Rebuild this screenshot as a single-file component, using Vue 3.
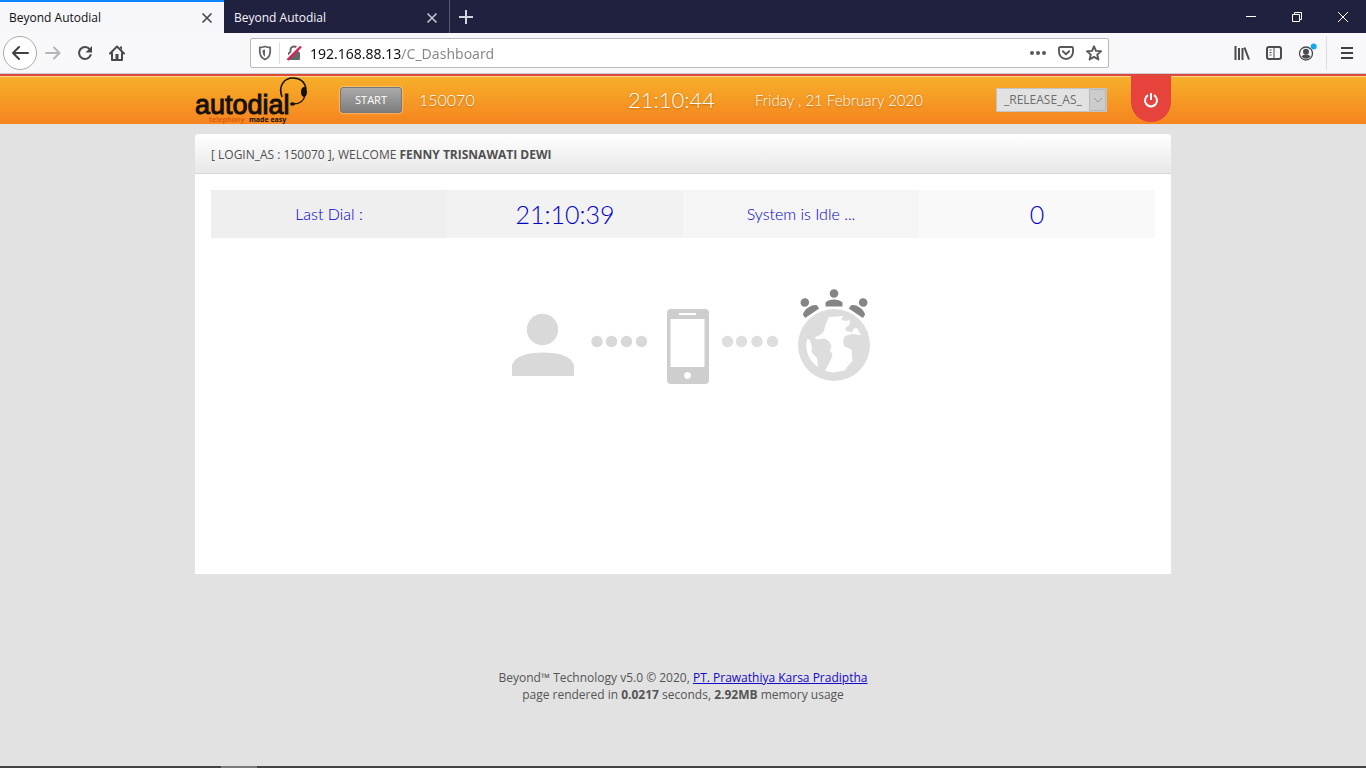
<script setup>
import { ref } from 'vue'

const url = ref('192.168.88.13/C_Dashboard')
const release = ref('_RELEASE_AS_')
const stats = [
  { text: 'Last Dial :', big: false },
  { text: '21:10:39', big: true },
  { text: 'System is Idle ...', big: false },
  { text: '0', big: true },
]
</script>

<template>
  <div class="window">
    <header class="browser">
      <div class="tabs">
        <div class="tab active">
          <span>Beyond Autodial</span>
          <button class="plain" aria-label="Close tab"><svg width="12" height="12" viewBox="0 0 12 12"><path d="M1.5 1.5l9 9m0-9l-9 9" stroke="#45454a" stroke-width="1.6" /></svg></button>
        </div>
        <div class="tab">
          <span>Beyond Autodial</span>
          <button class="plain" aria-label="Close tab"><svg width="12" height="12" viewBox="0 0 12 12"><path d="M1.5 1.5l9 9m0-9l-9 9" stroke="#c4c4d2" stroke-width="1.6" /></svg></button>
        </div>
        <button class="plain new" aria-label="New tab"><svg width="16" height="16" viewBox="0 0 16 16"><path d="M8 1v14M1 8h14" stroke="#d4d4de" stroke-width="2" /></svg></button>
        <div class="controls">
          <button class="plain" aria-label="Minimize"><svg width="12" height="12" viewBox="0 0 12 12"><path d="M1 5.5h10" stroke="#fff" /></svg></button>
          <button class="plain" aria-label="Restore"><svg width="12" height="12" viewBox="0 0 12 12"><path d="M1.5 3.5h7v7h-7zM3.5 3V1.500h7v7H9" fill="none" stroke="#fff" /></svg></button>
          <button class="plain" aria-label="Close window"><svg width="12" height="12" viewBox="0 0 12 12"><path d="M1 1l10 10M11 1L1 11" stroke="#fff" /></svg></button>
        </div>
      </div>

      <div class="toolbar">
        <div class="nav">
          <button class="plain back" aria-label="Back"><svg width="18" height="16" viewBox="0 0 18 16"><path d="M17 8H2m6-6L2 8l6 6" fill="none" stroke="#3f3f44" stroke-width="2" stroke-linecap="round" stroke-linejoin="round" /></svg></button>
          <button class="plain" aria-label="Forward"><svg width="16" height="14" viewBox="0 0 16 14"><path d="M1 7h13M9 1.500L14.500 7 9 12.500" fill="none" stroke="#b6b6b9" stroke-width="2" stroke-linecap="round" stroke-linejoin="round" /></svg></button>
          <button class="plain" aria-label="Reload"><svg width="16" height="16" viewBox="0 0 16 16"><path d="M12.800 4.300A6 6 0 1 0 13.700 10" fill="none" stroke="#49494e" stroke-width="2" stroke-linecap="round" /><path d="M15 1v6.500H8.500z" fill="#49494e" /></svg></button>
          <button class="plain" aria-label="Home"><svg width="16" height="16" viewBox="0 0 16 16"><path d="M1 8.500L8 1.500l7 7M3 7.500V15h10V7.500" fill="none" stroke="#49494e" stroke-width="2" stroke-linecap="round" stroke-linejoin="round" /><path d="M6.500 9h3v6h-3zM11 1.500h2V5l-2-2z" fill="#49494e" /></svg></button>
        </div>
        <div class="address">
          <svg width="14" height="16" viewBox="0 0 14 16"><path d="M7 1.500c2 .8 4 1 5.200 1v4.300c0 3.800-2 6.200-5.200 7.700-3.200-1.500-5.200-3.900-5.200-7.700V2.500c1.200 0 3.200-.2 5.200-1z" fill="none" stroke="#646468" stroke-width="1.800" stroke-linejoin="round" /><path d="M7 4.500v7.200C5.300 10.400 4.600 9 4.600 6.500V5.100z" fill="#646468" /></svg>
          <i class="split"></i>
          <svg width="16" height="16" viewBox="0 0 16 16"><path d="M4.500 8V5a3.500 3.500 0 0 1 7 0v3" fill="none" stroke="#666" stroke-width="2" /><rect x="2" y="7" width="12" height="8" rx="1" fill="#666" /><path d="M.5 13.500L13.500 .5" stroke="#fff" stroke-width="2" /><path d="M1.500 15L15 1.500" stroke="#df2056" stroke-width="2.400" /></svg>
          <input v-model="url" type="text" aria-label="Address" />
          <button class="plain" aria-label="Page actions"><svg width="16" height="4" viewBox="0 0 16 4"><g fill="#58585c"><circle cx="2" cy="2" r="2" /><circle cx="8" cy="2" r="2" /><circle cx="14" cy="2" r="2" /></g></svg></button>
          <button class="plain" aria-label="Save to Pocket"><svg width="16" height="14" viewBox="0 0 16 14"><path d="M2.200 1h11.600q1.200 0 1.200 1.200V6A7 7 0 0 1 1 6V2.200Q1 1 2.200 1zM4.800 5.200L8 8.200l3.200-3" fill="none" stroke="#58585c" stroke-width="1.900" stroke-linecap="round" stroke-linejoin="round" /></svg></button>
          <button class="plain" aria-label="Bookmark"><svg width="16" height="16" viewBox="0 0 16 16"><path d="M8 1.300l2 4.600 5 .4-3.800 3.300 1.200 4.900L8 11.900l-4.400 2.600 1.200-4.900L1 6.300l5-.4z" fill="none" stroke="#58585c" stroke-width="1.900" stroke-linejoin="round" /></svg></button>
        </div>
        <div class="extras">
          <button class="plain" aria-label="Library"><svg width="16" height="14" viewBox="0 0 16 14"><path d="M1.500 0v14M5 2v12M8.500 2v12M10.500 1.500l4.500 12" fill="none" stroke="#4a4a4f" stroke-width="2" /></svg></button>
          <button class="plain" aria-label="Sidebar"><svg width="16" height="14" viewBox="0 0 16 14"><path d="M8 1v12M3.500 4h2M3.500 6.500h2M3.500 9h2" stroke="#4a4a4f" /><rect x="1" y="1" width="14" height="12" rx="2" fill="none" stroke="#4a4a4f" stroke-width="2" /></svg></button>
          <button class="plain" aria-label="Account"><svg width="20" height="20" viewBox="0 0 20 20"><circle cx="8" cy="10.500" r="6.500" fill="none" stroke="#4a4a4f" stroke-width="1.300" /><circle cx="8" cy="8.800" r="3" fill="#4a4a4f" /><path d="M3.500 13.500q1.200-2 4.500-2t4.500 2Q10.800 15.700 8 15.700t-4.500-2.200z" fill="#4a4a4f" /><circle cx="15.700" cy="3.500" r="3" fill="#12a8ec" /></svg></button>
          <button class="plain menu" aria-label="Menu"><svg width="12" height="12" viewBox="0 0 12 12"><path d="M0 1h12M0 6h12M0 11h12" stroke="#3f3f44" stroke-width="2" /></svg></button>
        </div>
      </div>
    </header>

    <div class="banner">
      <div class="banner-inner">
        <svg class="logo" width="114" height="48" viewBox="0 0 114 48" role="img" aria-label="autodial telephony made easy">
          <text class="word" x="0" y="38">autodial</text>
          <g class="tag"><text class="dim" x="14" y="46">telephony</text><text x="54" y="46">made easy</text></g>
          <path d="M87 21C83 10 89 2 98 2c8 0 12 5 13 11" fill="none" stroke="#15100a" stroke-width="1.600" />
          <path d="M110 19c-1 6-5 9-12 9" fill="none" stroke="#15100a" stroke-width="1.400" />
          <ellipse cx="109" cy="16" rx="3" ry="5" fill="#15100a" /><ellipse cx="97.500" cy="28" rx="2.500" ry="1.700" fill="#15100a" />
        </svg>
        <div><button class="start">START</button></div>
        <span class="agent">150070</span>
        <span class="clock">21:10:44</span>
        <span class="date">Friday , 21 February 2020</span>
        <div class="picker">
          <select v-model="release" aria-label="Release as"><option>_RELEASE_AS_</option></select>
          <span class="arrow"><svg width="10" height="6" viewBox="0 0 10 6"><path d="M1 1l4 4 4-4" fill="none" stroke="#999" /></svg></span>
        </div>
        <button class="power" aria-label="Log out"><svg width="16" height="16" viewBox="0 0 16 16"><path d="M5 3.200a6 6 0 1 0 6 0M8 1v7" fill="none" stroke="#fff" stroke-width="2" /></svg></button>
      </div>
    </div>

    <main class="panel">
      <h1>[ LOGIN_AS : 150070 ], WELCOME <b>FENNY TRISNAWATI DEWI</b></h1>
      <div class="stats">
        <div v-for="s in stats" :key="s.text" :class="{ big: s.big }">{{ s.text }}</div>
      </div>
      <svg class="flow" width="374" height="96" viewBox="-14 0 374 96" role="img" aria-label="Agent, phone and customers">
        <g fill="#d9d9d9"><circle cx="32.500" cy="40.500" r="15.700" /><path d="M2 87V76C5 67 17 63.500 33 63.500S61 67 64 76v11z" /></g>
        <g fill="#d8d8d8"><circle cx="87" cy="52.500" r="5.700" /><circle cx="101.500" cy="52.500" r="5.700" /><circle cx="116.500" cy="52.500" r="5.700" /><circle cx="131.500" cy="52.500" r="5.700" /></g>
        <path d="M161 20h34q4 0 4 4v67q0 4-4 4h-34q-4 0-4-4V24q0-4 4-4zm-.5 10v48h34V30zM169 24v2h17v-2zM177.500 83a3.500 3.500 0 1 0 .1 0z" fill="#cecece" fill-rule="evenodd" />
        <g fill="#dedede"><circle cx="217.500" cy="52.500" r="5.700" /><circle cx="231.500" cy="52.500" r="5.700" /><circle cx="247" cy="52.500" r="5.700" /><circle cx="262.500" cy="52.500" r="5.700" /></g>
        <circle cx="324" cy="56" r="36" fill="#ddd" />
        <g fill="#fff">
          <path d="M319 28L327 27.500 333 27 331.500 31 336.500 32 339.500 30.500 340 35 335 39.500 336.500 42 342 43.500 344 39.500 347 39 351 46 342 45 335 47 333 52 334 57 341.500 60.500 342.500 72 337 78 335 81.500 323 83.500 315 82 317.500 77 321 70.500 322.500 65 320 62 321.500 57 319.500 53 315 49.500 310.500 50 307 50.500 304.500 48.500 311 45.500 314 42 315 37z" />
          <path d="M297 50L300 51 302 58.500 301.500 63 307 69 308 78C300 73 294 62 297 50z" />
        </g>
        <g fill="#858585">
          <g><circle cx="324" cy="4.500" r="4.300" /><path d="M315.500 17.500v-4q3-3 8.500-3t8.500 3v4z" /></g>
          <g transform="rotate(-34.500 324 56)"><circle cx="324" cy="4.500" r="4.300" /><path d="M315.500 17.500v-4q3-3 8.500-3t8.500 3v4z" /></g>
          <g transform="rotate(34.500 324 56)"><circle cx="324" cy="4.500" r="4.300" /><path d="M315.500 17.500v-4q3-3 8.500-3t8.500 3v4z" /></g>
        </g>
      </svg>
    </main>

    <footer class="foot">
      <p>Beyond™ Technology v5.0 © 2020, <a href="#">PT. Prawathiya Karsa Pradiptha</a></p>
      <p>page rendered in <b>0.0217</b> seconds, <b>2.92MB</b> memory usage</p>
    </footer>
    <div class="taskbar"><i></i></div>
  </div>
</template>

<style>
body { margin: 0; background: #e2e2e2; }
</style>

<style scoped>
* { box-sizing: border-box; }
.window { min-height: 100vh; display: flex; flex-direction: column; font: 12px/16px "Open Sans", "Noto Sans", sans-serif; color: #555; background: #e2e2e2; }
.plain { border: 0; padding: 0; background: none; display: flex; align-items: center; justify-content: center; }
svg { display: block; flex: none; }
.tabs { display: flex; height: 33px; background: #20213f; }
.tab { width: 226px; padding: 2px 11px 0 10px; display: flex; align-items: center; justify-content: space-between; color: #f4f4fa; border-right: 1px solid #56576f; }
.tab.active { width: 224px; padding-left: 9px; background: #f7f7fb; color: #111; border-right: 0; border-top: 2px solid #0a84ff; padding-top: 0; }
.new { width: 32px; }
.controls { margin-left: auto; display: flex; }
.controls .plain { width: 46px; }
.toolbar { display: flex; align-items: center; height: 41px; padding: 0 13px 0 3px; background: #f8f8fb; border-bottom: 1px solid #ccccd0; }
.nav { display: flex; align-items: center; width: 247px; }
.nav .plain { width: 32px; height: 32px; }
.nav .back { width: 34px; height: 34px; border: 1px solid #aaa; border-radius: 50%; background: #fff; }
.address { flex: 1; display: flex; align-items: center; height: 30px; padding: 0 6px 0 7px; background: #fff; border: 1px solid #b9b9bc; border-radius: 2px; }
.address .plain { margin-left: 12px; }
.split { width: 1px; height: 22px; margin: 0 6px 0 7px; background: #dedede; }
.address input { flex: 1; min-width: 0; height: 26px; margin-left: 8px; padding: 0; border: 0; outline: 0; font: 14px/20px "Noto Sans", "Open Sans", sans-serif; color: transparent; background: linear-gradient(90deg, #111 92px, #858585 92px); -webkit-background-clip: text; background-clip: text; }
.extras { display: flex; align-items: center; gap: 16px; margin-left: 125px; }
.extras .menu { width: 27px; height: 34px; margin-left: -8px; padding-left: 13px; border-left: 1px solid #dcdce0; }
.banner { border-top: 2px solid #dc4938; background: linear-gradient(#f6b02a, #f5841f); box-shadow: inset 0 1px #fbd596; }
.banner-inner { display: grid; grid-template-columns: 145px 79px 209px 127px 241px 135px 40px; align-items: center; width: 976px; max-width: 100%; height: 48px; margin: 0 auto; color: #fff; font-family: Lato, sans-serif; font-weight: 300; text-shadow: 0 1px 2px #b96a08; }
.logo { text-shadow: none; }
.word { font: 27px "Liberation Sans", sans-serif; fill: #15100a; stroke: #15100a; stroke-width: 1px; }
.tag { font: bold 7px "Open Sans", sans-serif; fill: #15100a; }
.dim { fill: #dc5f10; }
.start { height: 26px; width: 62px; padding: 0; border: 1px solid #777; border-radius: 3px; background: linear-gradient(#aaa, #7d7d7d); color: #fff; font: 11px/16px "Open Sans", sans-serif; box-shadow: 0 0 2px #fff; }
.agent { font-size: 16px; }
.clock { font-size: 22px; }
.date { font-size: 15px; white-space: nowrap; }
.picker { position: relative; width: 111px; height: 24px; text-shadow: none; }
.picker select { appearance: none; width: 100%; height: 24px; padding: 0 24px 0 7px; border: 1px solid #c4c4c4; border-radius: 0; background: #e2e2e2; color: #6d6d6d; font: 12px/16px "Open Sans", sans-serif; }
.arrow { position: absolute; top: 1px; right: 1px; width: 17px; height: 22px; display: flex; align-items: center; justify-content: center; border: 1px solid #b9b9b9; background: #ccc; pointer-events: none; }
.power { align-self: start; width: 40px; height: 46px; padding: 2px 0 0; border: 0; border-radius: 0 0 20px 20px; background: #e6433c; display: flex; align-items: center; justify-content: center; }
.panel { width: 976px; max-width: 100%; min-height: 440px; margin: 10px auto 0; background: #fff; border-radius: 4px 4px 0 0; }
.panel h1 { margin: 0; padding: 13px 16px 10px; border-bottom: 1px solid #d8d8d8; border-radius: 4px 4px 0 0; background: linear-gradient(#fff, #e8e8e8); font-size: 12px; line-height: 16px; font-weight: 400; color: #505050; }
.stats { display: grid; grid-template-columns: repeat(4, 1fr); margin: 16px 16px 0; line-height: 48px; text-align: center; font-family: Lato, sans-serif; font-size: 16px; font-weight: 300; color: #0000c8; }
.stats div:nth-child(1) { background: #efefef; }
.stats div:nth-child(2) { background: #f2f2f2; }
.stats div:nth-child(3) { background: #f5f5f5; }
.stats div:nth-child(4) { background: #f9f9f9; }
.stats .big { font-size: 25px; }
.flow { margin: 51px auto 0; }
.foot { margin: 95px 0 auto; text-align: center; line-height: 17px; }
.foot p { margin: 0; }
.foot a { color: #1409c6; }
.taskbar { height: 2px; background: #444; }
.taskbar i { display: block; width: 36px; height: 2px; margin-left: 221px; background: #7b7b7b; }
</style>
